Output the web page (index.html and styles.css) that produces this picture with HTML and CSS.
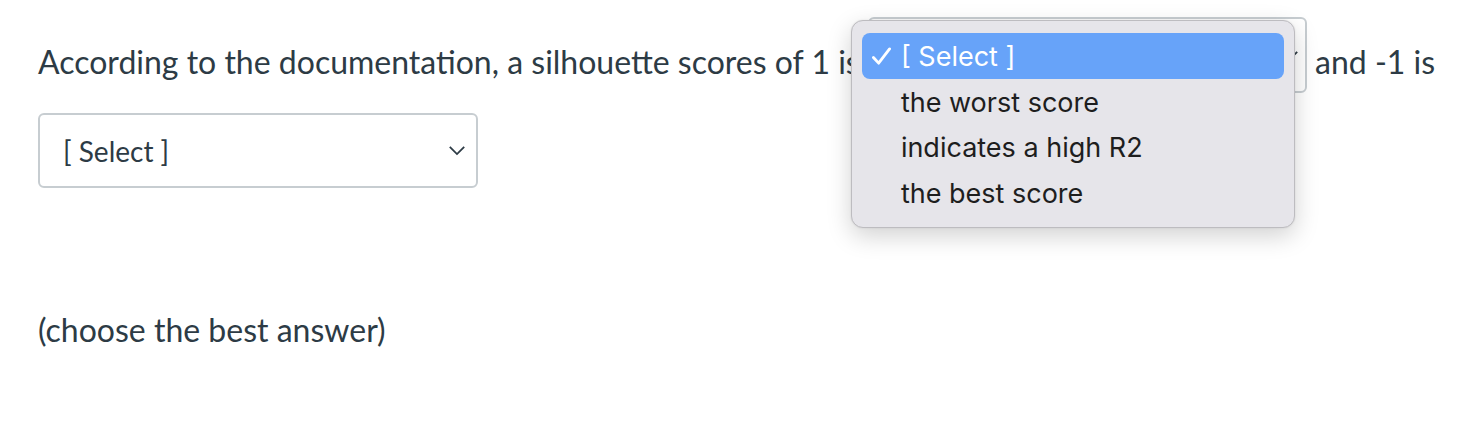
FILE: index.html
```html
<!DOCTYPE html>
<html>
<head>
<meta charset="utf-8">
<link rel="stylesheet" href="styles.css">
</head>
<body>
<div class="page">
  <p class="question">According to the documentation, a silhouette scores of 1 is <span class="select inline-select"><span class="select-text">[ Select ]</span><svg class="chev" viewBox="0 0 20 12" width="18" height="11"><path d="M2 2 L10 10 L18 2" fill="none" stroke="#2d3b45" stroke-width="2"/></svg><span class="menu">
        <span class="menu-item active"><svg class="check" viewBox="0 0 20 20" width="19" height="19"><path d="M1.5 11 L7 17 L18.5 2" fill="none" stroke="#fff" stroke-width="3" stroke-linecap="round" stroke-linejoin="round"/></svg>[ Select ]</span>
        <span class="menu-item">the worst score</span>
        <span class="menu-item">indicates a high R2</span>
        <span class="menu-item">the best score</span>
      </span></span> and -1 is</p>
  <div class="row">
    <div class="select block-select"><span class="select-text">[ Select ]</span><svg class="chev" viewBox="0 0 20 12" width="18" height="11"><path d="M2 2 L10 10 L18 2" fill="none" stroke="#2d3b45" stroke-width="2"/></svg></div>
  </div>
  <p class="hint">(choose the best answer)</p>
</div>
</body>
</html>
```
FILE: styles.css
```css
html, body {
  margin: 0;
  padding: 0;
  background: #ffffff;
}
.page {
  padding: 17px 20px 0 38px;
  font-family: Lato, "Liberation Sans", sans-serif;
  color: #2d3b45;
  font-size: 32px;
}
.question {
  margin: 0;
  line-height: 40px;
}
.select {
  box-sizing: border-box;
  display: inline-flex;
  align-items: center;
  justify-content: space-between;
  border: 2px solid #c7cdd1;
  border-radius: 6px;
  background: #fff;
  font-size: 28px;
  color: #2d3b45;
  padding: 0 10px 0 23px;
}
.inline-select {
  position: relative;
  width: 439px;
  height: 76px;
  vertical-align: 8px;
  padding-right: 6px;
}
.block-select {
  width: 440px;
  height: 75px;
}
.row {
  margin-top: 20px;
}
.chev {
  display: block;
}
.menu {
  position: absolute;
  left: -19px;
  top: 1px;
  width: 444px;
  box-sizing: border-box;
  padding: 12px 10px 12px 10px;
  background: #e6e5ea;
  border: 1px solid #bdbcc0;
  border-radius: 12px;
  box-shadow: 0 8px 24px rgba(0,0,0,0.18), 0 0 2px rgba(0,0,0,0.1);
  display: flex;
  flex-direction: column;
  font-family: Inter, "Liberation Sans", sans-serif;
  font-size: 27px;
  line-height: 32px;
  color: #1e1e1e;
  text-align: left;
}
.menu-item {
  display: flex;
  align-items: center;
  height: 45.5px;
  padding-left: 39px;
  padding-top: 3px;
  box-sizing: border-box;
  border-radius: 8px;
  position: relative;
}
.menu-item.active {
  background: #67a3f9;
  color: #ffffff;
}
.check {
  position: absolute;
  left: 10px;
  top: 14px;
}
.hint {
  margin: 122px 0 0 0;
  line-height: 40px;
}
```
